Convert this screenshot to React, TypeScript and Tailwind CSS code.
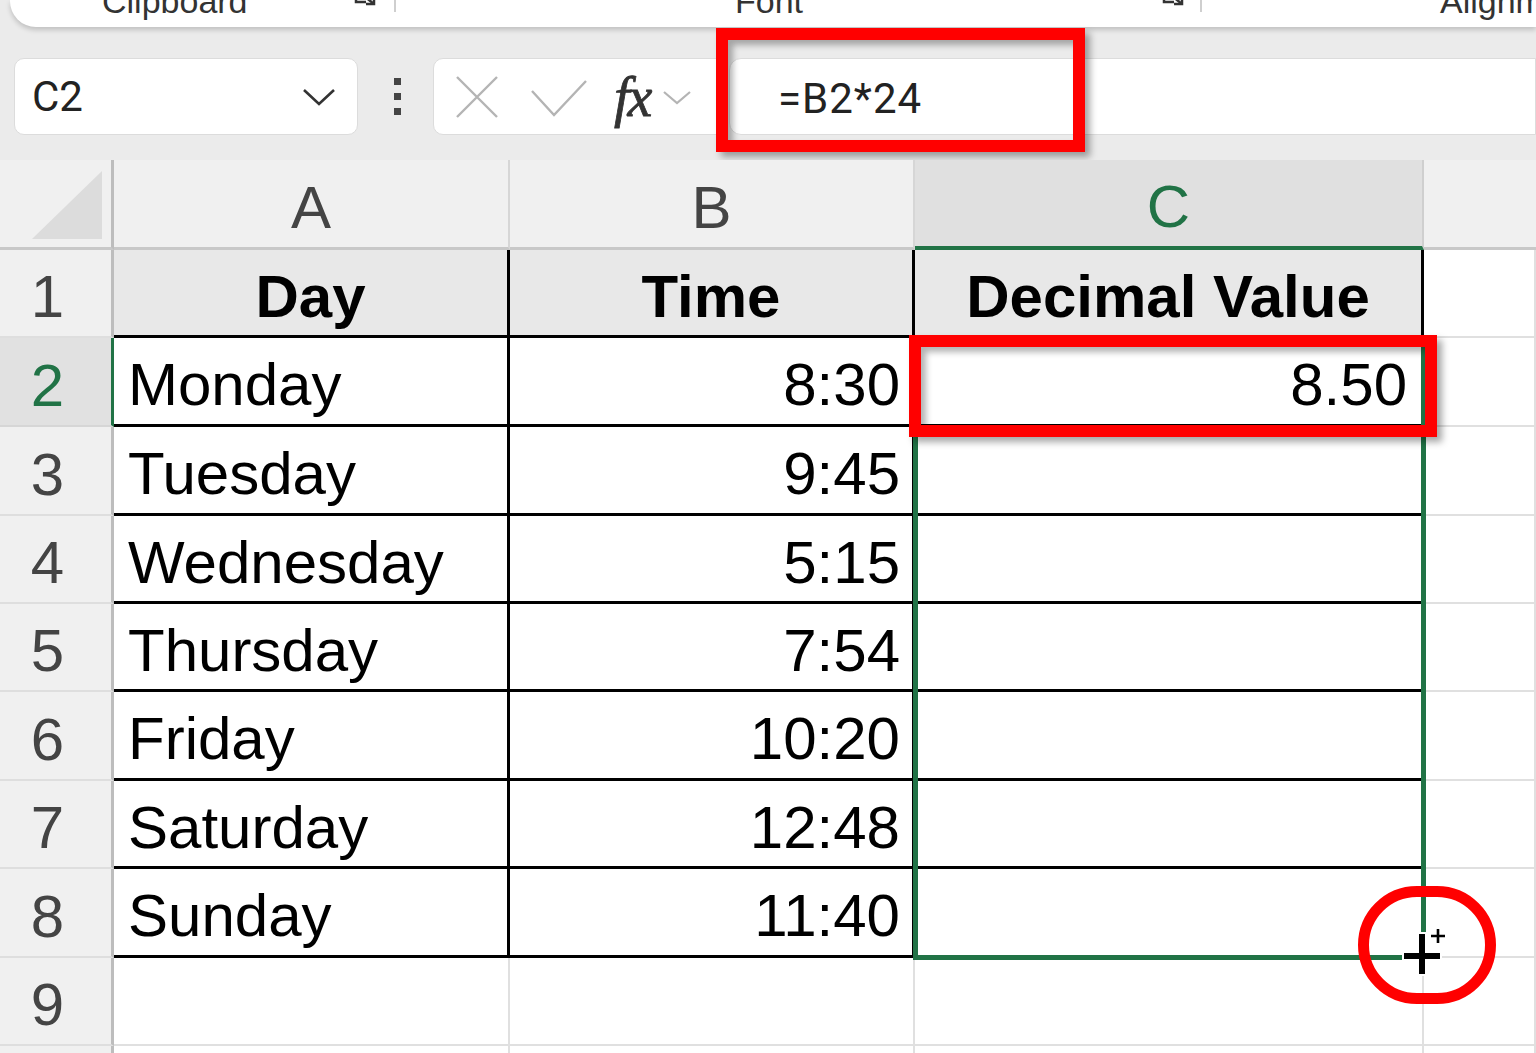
import type { ReactNode } from "react";

const sans = "font-['Liberation_Sans',Arial,sans-serif]";

const days: [string, string][] = [
    ["Monday", "8:30"],
    ["Tuesday", "9:45"],
    ["Wednesday", "5:15"],
    ["Thursday", "7:54"],
    ["Friday", "10:20"],
    ["Saturday", "12:48"],
    ["Sunday", "11:40"],
];

function Cell({ className, children }: { className: string; children?: ReactNode }) {
    return <div className={`flex items-center pt-[8px] leading-none text-[60px] ${className}`}>{children}</div>;
}

function RowHead({ n, active }: { n: number; active?: boolean }) {
    return (
        <Cell
            className={
                active
                    ? "justify-center pr-[16px] bg-[#e1e1e1] text-[#217346] border-r-[3px] border-r-[#217346] border-b-2 border-b-[#d6d6d6]"
                    : "justify-center pr-[16px] bg-[#f0f0f0] text-[#444] border-r-[3px] border-r-[#bdbdbd] border-b-2 border-b-[#dedede]"
            }>
            {n}
        </Cell>
    );
}

function TopBar() {
    return (
        <div className="relative h-[160px] bg-[#ebebeb]">
            {/* ribbon bottom edge */}
            <div className={`ml-[10px] h-[27px] bg-white rounded-bl-[26px] shadow-[0_3px_5px_rgba(0,0,0,0.18)] relative overflow-hidden text-[34px] text-[#333] ${sans}`}>
                <span className="absolute left-[92px] top-[-24px]">Clipboard</span>
                <svg className="absolute left-[342px] top-[-6px]" width="30" height="14" viewBox="0 0 30 14">
                    <path d="M4 0v8h10M22 0v10h-8" fill="none" stroke="#333" strokeWidth="2.5" />
                    <path d="M12 2l10 8" stroke="#333" strokeWidth="2.5" />
                </svg>
                <div className="absolute left-[384px] top-0 w-[2px] h-[12px] bg-[#cfcfcf]" />
                <span className="absolute left-[725px] top-[-24px]">Font</span>
                <svg className="absolute left-[1150px] top-[-6px]" width="30" height="14" viewBox="0 0 30 14">
                    <path d="M4 0v8h10M22 0v10h-8" fill="none" stroke="#333" strokeWidth="2.5" />
                    <path d="M12 2l10 8" stroke="#333" strokeWidth="2.5" />
                </svg>
                <div className="absolute left-[1190px] top-0 w-[2px] h-[12px] bg-[#cfcfcf]" />
                <span className="absolute left-[1430px] top-[-24px]">Alignment</span>
            </div>

            {/* formula bar */}
            <div className="flex items-start pl-[14px] pt-[31px]">
                <div className="w-[344px] h-[77px] bg-white rounded-[10px] border border-[#dcdcdc] flex items-center pl-[17px] pr-[20px]">
                    <span className="text-[42px] text-[#222] font-['Roboto',sans-serif] flex-1">C2</span>
                    <svg width="36" height="22" viewBox="0 0 36 22">
                        <path d="M3 4l15 14 15-14" fill="none" stroke="#333" strokeWidth="2.6" />
                    </svg>
                </div>
                <div className="w-[75px] h-[77px] flex flex-col items-center justify-center gap-[8px] pl-[4px]">
                    <div className="w-[7px] h-[7px] bg-[#444]" />
                    <div className="w-[7px] h-[7px] bg-[#444]" />
                    <div className="w-[7px] h-[7px] bg-[#444]" />
                </div>
                <div className="w-[292px] h-[77px] bg-white rounded-l-[10px] border border-[#dcdcdc] flex items-center pl-[20px]">
                    <svg width="46" height="44" viewBox="0 0 46 44">
                        <path d="M3 2l40 40M43 2L3 42" stroke="#b4b4b4" strokeWidth="2.4" />
                    </svg>
                    <svg className="ml-[30px]" width="58" height="40" viewBox="0 0 58 40">
                        <path d="M2 14l22 24L56 4" fill="none" stroke="#b4b4b4" strokeWidth="2.4" />
                    </svg>
                    <span className="ml-[26px] text-[56px] italic text-[#333] font-['Liberation_Serif',serif] leading-none tracking-[-2px] [-webkit-text-stroke:0.8px_#333]">fx</span>
                    <svg className="ml-[12px]" width="30" height="16" viewBox="0 0 30 16">
                        <path d="M2 3l13 11 13-11" fill="none" stroke="#b4b4b4" strokeWidth="2.2" />
                    </svg>
                </div>
                <div className="ml-[4px] flex-1 h-[77px] bg-white rounded-l-[12px] border border-[#dcdcdc] flex items-center pl-[48px] pt-[4px]">
                    <span className="text-[42px] text-[#222] font-['Roboto',sans-serif] tracking-[1px]">=B2*24</span>
                </div>
            </div>

            {/* red highlight around formula */}
            <div className="absolute left-[716px] top-[28px] w-[369px] h-[124px] border-[12px] border-[#ff0000] shadow-[5px_5px_7px_rgba(0,0,0,0.35),inset_5px_5px_6px_rgba(0,0,0,0.3)]" />
        </div>
    );
}

function Sheet() {
    const dataBorder = "border-r-[3px] border-r-black border-b-[3px] border-b-black";
    const gridBorder = "border-r-2 border-r-[#e0e0e0] border-b-2 border-b-[#e0e0e0]";
    return (
        <div className={`relative grid grid-cols-[114px_396px_405px_509px_1fr] grid-rows-[90px_88px_89px_89px_88px_88px_89px_88px_89px_88px_1fr] h-[893px] bg-white ${sans}`}>
            {/* column headers */}
            <div className="bg-[#f0f0f0] border-r-[3px] border-r-[#bdbdbd] border-b-[3px] border-b-[#c8c8c8] flex items-end justify-end pr-[9px] pb-[8px]">
                <svg width="70" height="68" viewBox="0 0 70 68">
                    <path d="M70 0v68H0z" fill="#dcdcdc" />
                </svg>
            </div>
            <Cell className="justify-center bg-[#f0f0f0] text-[#444] border-r-2 border-r-[#d6d6d6] border-b-[3px] border-b-[#c8c8c8]">A</Cell>
            <Cell className="justify-center bg-[#f0f0f0] text-[#444] border-r-2 border-r-[#d6d6d6] border-b-[3px] border-b-[#c8c8c8]">B</Cell>
            <Cell className="justify-center bg-[#e0e0e0] text-[#217346] border-r-2 border-r-[#cfcfcf] border-b-4 border-b-[#217346]">C</Cell>
            <Cell className="bg-[#f0f0f0] border-b-[3px] border-b-[#c8c8c8]" />

            {/* row 1 */}
            <RowHead n={1} />
            <Cell className={`justify-center font-bold bg-[#e8e8e8] text-black ${dataBorder}`}>Day</Cell>
            <Cell className={`justify-center font-bold bg-[#e8e8e8] text-black ${dataBorder}`}>Time</Cell>
            <Cell className={`justify-center font-bold bg-[#e8e8e8] text-black ${dataBorder}`}>Decimal Value</Cell>
            <Cell className={gridBorder} />

            {days.map(([day, time], i) => (
                <div key={day} className="contents">
                    <RowHead n={i + 2} active={i === 0} />
                    <Cell className={`pl-[14px] text-black ${dataBorder}`}>{day}</Cell>
                    <Cell className={`justify-end pr-[12px] text-black ${dataBorder}`}>{time}</Cell>
                    <Cell className={`justify-end pr-[14px] text-black ${dataBorder}`}>{i === 0 ? "8.50" : ""}</Cell>
                    <Cell className={gridBorder} />
                </div>
            ))}

            {/* rows 9, 10 */}
            <RowHead n={9} />
            <Cell className={gridBorder} />
            <Cell className={gridBorder} />
            <Cell className={gridBorder} />
            <Cell className={gridBorder} />
            <RowHead n={10} />
            <Cell className={gridBorder} />
            <Cell className={gridBorder} />
            <Cell className={gridBorder} />
            <Cell className={gridBorder} />

            {/* selection C2:C8 */}
            <div className="absolute left-[913px] top-[176px] w-[513px] h-[624px] border-[5px] border-[#217346]" />

            {/* red highlight around C2 */}
            <div className="absolute left-[909px] top-[175px] w-[528px] h-[102px] border-[12px] border-[#ff0000] shadow-[5px_5px_7px_rgba(0,0,0,0.35),inset_5px_5px_6px_rgba(0,0,0,0.3)]" />

            {/* fill-handle cursor */}
            <svg className="absolute left-[1398px] top-[764px]" width="54" height="54" viewBox="0 0 54 54">
                <path d="M24 8v44M4 32h40" stroke="white" strokeWidth="11" />
                <path d="M24 10v40M6 32h36" stroke="black" strokeWidth="6" />
                <path d="M40 4v16M32 12h16" stroke="white" strokeWidth="5" />
                <path d="M40 5v14M33 12h14" stroke="black" strokeWidth="2.6" />
            </svg>

            {/* red circle around fill handle */}
            <div className="absolute left-[1358px] top-[726px] w-[138px] h-[118px] rounded-full border-[11px] border-[#ff0000]" />
        </div>
    );
}

export default function App() {
    return (
        <div className="w-[1536px] h-[1053px] overflow-hidden bg-white">
            <TopBar />
            <Sheet />
        </div>
    );
}
